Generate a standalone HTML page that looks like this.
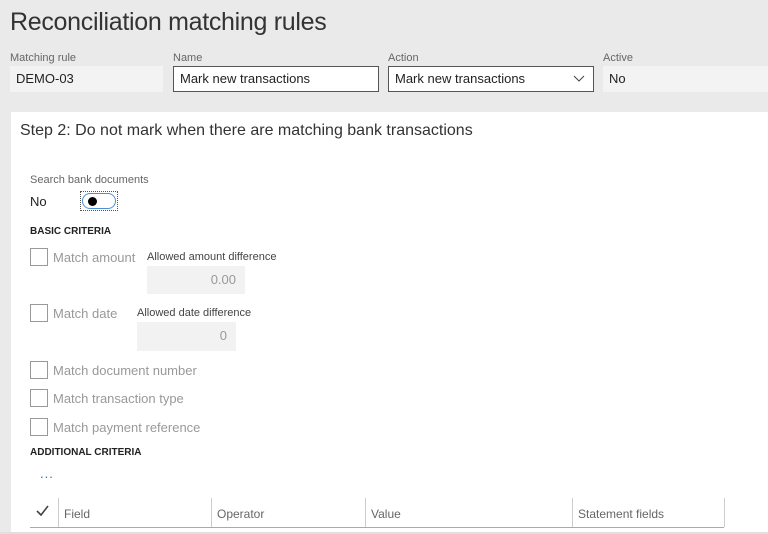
<!DOCTYPE html><html><head><style>
body{margin:0;width:768px;height:534px;background:#eaeaea;font-family:"Liberation Sans",sans-serif;position:relative;overflow:hidden;color:#222}
.a{position:absolute;white-space:nowrap}
.lbl{font-size:11px;color:#666}
.fld{position:absolute;height:26px;font-size:13px;line-height:26px;padding-left:6px;box-sizing:border-box}
.cb{position:absolute;left:30px;width:18px;height:18px;border:1px solid #999;box-sizing:border-box;background:#fff}
.ct{position:absolute;left:53px;font-size:13px;color:#999}
.inp{position:absolute;background:#f2f2f2;font-size:13px;color:#999;text-align:right;box-sizing:border-box;padding-right:9px;line-height:28px;height:28px}
.th{position:absolute;top:498px;height:29px;border-left:1px solid #ccc;font-size:12px;color:#666;line-height:32px;padding-left:5px}
</style></head><body>
<div class="a" style="left:10px;top:8px;font-size:25px;font-weight:300;color:#333;letter-spacing:-0.3px">Reconciliation matching rules</div>
<div class="a lbl" style="left:10px;top:52px">Matching rule</div>
<div class="a lbl" style="left:173px;top:52px">Name</div>
<div class="a lbl" style="left:388px;top:52px">Action</div>
<div class="a lbl" style="left:603px;top:52px">Active</div>
<div class="fld" style="left:10px;top:66px;width:153px;background:#f3f3f3">DEMO-03</div>
<div class="fld" style="left:173px;top:66px;width:206px;background:#fff;border:1px solid #555;line-height:24px">Mark new transactions</div>
<div class="fld" style="left:388px;top:66px;width:206px;background:#fff;border:1px solid #555;line-height:24px">Mark new transactions<svg style="position:absolute;right:8px;top:8px" width="12" height="8"><path d="M1 1L6 6L11 1" stroke="#444" fill="none"/></svg></div>
<div class="fld" style="left:603px;top:66px;width:165px;background:#f3f3f3">No</div>
<div style="position:absolute;left:11px;top:112px;width:757px;height:420px;background:#fff"></div>
<div style="position:absolute;left:0;top:532px;width:768px;height:2px;background:#e0e0e0"></div>
<div class="a" style="left:20px;top:122px;font-size:16px;font-weight:300;color:#333">Step 2: Do not mark when there are matching bank transactions</div>
<div class="a lbl" style="left:30px;top:174px">Search bank documents</div>
<div class="a" style="left:30px;top:194px;font-size:13px">No</div>
<div style="position:absolute;left:80px;top:191px;width:38px;height:20px;border:1px dotted #555;box-sizing:border-box"><div style="position:absolute;left:1px;top:1px;width:34px;height:16px;border:1.5px solid #4a90d9;border-radius:9px;box-sizing:border-box"></div><div style="position:absolute;left:7px;top:5px;width:9px;height:9px;border-radius:50%;background:#000"></div></div>
<div class="a" style="left:30px;top:226px;font-size:10px;font-weight:bold;color:#222">BASIC CRITERIA</div>
<div class="cb" style="top:248px"></div><div class="ct" style="top:250px">Match amount</div>
<div class="a" style="left:147px;top:251px;font-size:11px;color:#444">Allowed amount difference</div>
<div class="inp" style="left:147px;top:266px;width:98px">0.00</div>
<div class="cb" style="top:304px"></div><div class="ct" style="top:306px">Match date</div>
<div class="a" style="left:137px;top:307px;font-size:11px;color:#444">Allowed date difference</div>
<div class="inp" style="left:137px;top:322px;width:99px;height:29px">0</div>
<div class="cb" style="top:361px"></div><div class="ct" style="top:363px">Match document number</div>
<div class="cb" style="top:389px"></div><div class="ct" style="top:391px">Match transaction type</div>
<div class="cb" style="top:418px"></div><div class="ct" style="top:420px">Match payment reference</div>
<div class="a" style="left:30px;top:447px;font-size:10px;font-weight:bold;color:#222">ADDITIONAL CRITERIA</div>
<div class="a" style="left:40px;top:466px;font-size:13px;color:#2a6ebb;letter-spacing:1px">...</div>
<svg style="position:absolute;left:36px;top:505px" width="14" height="12"><path d="M1 6L5 10L12 1" stroke="#444" stroke-width="1.6" fill="none"/></svg>
<div class="th" style="left:58px;width:146px">Field</div>
<div class="th" style="left:211px;width:148px">Operator</div>
<div class="th" style="left:365px;width:201px">Value</div>
<div class="th" style="left:572px;width:146px;border-right:1px solid #ccc">Statement fields</div>
<div style="position:absolute;left:30px;top:527px;width:694px;height:1px;background:#aaa"></div>
</body></html>
